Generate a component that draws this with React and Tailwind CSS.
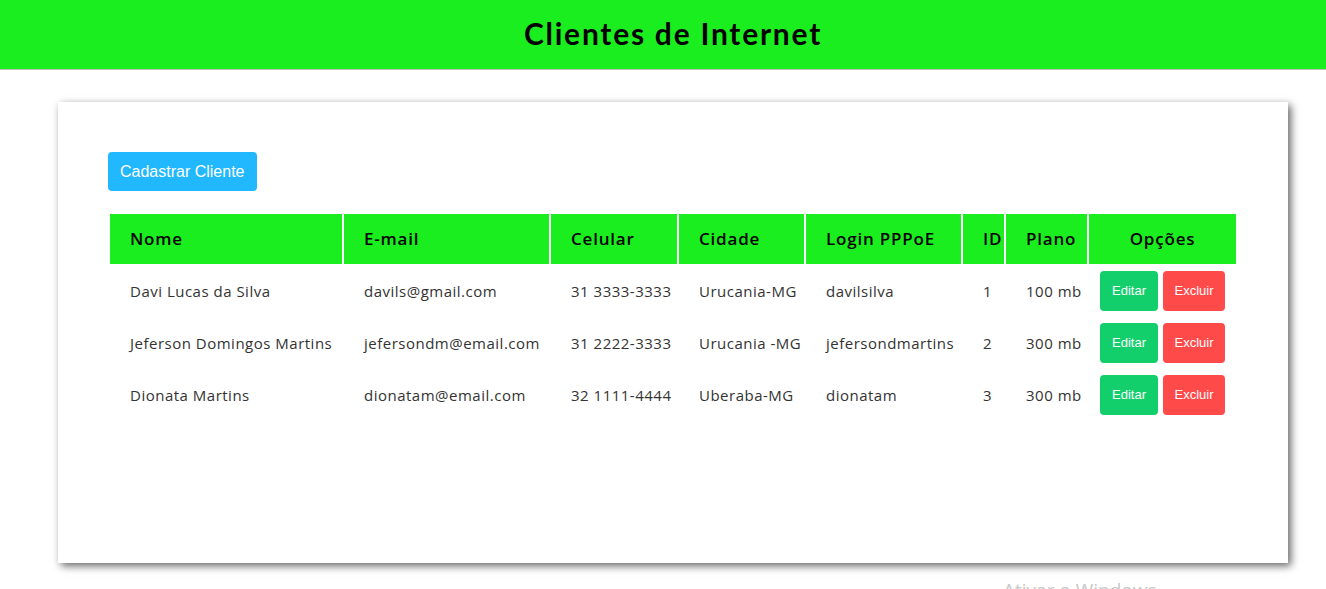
import React from "react";

const rows = [
  ["Davi Lucas da Silva", "davils@gmail.com", "31 3333-3333", "Urucania-MG", "davilsilva", "1", "100 mb"],
  ["Jeferson Domingos Martins", "jefersondm@email.com", "31 2222-3333", "Urucania -MG", "jefersondmartins", "2", "300 mb"],
  ["Dionata Martins", "dionatam@email.com", "32 1111-4444", "Uberaba-MG", "dionatam", "3", "300 mb"],
];

const heads = [
  ["Nome", "w-[232px]"],
  ["E-mail", "w-[205px]"],
  ["Celular", "w-[126px]"],
  ["Cidade", "w-[125px]"],
  ["Login PPPoE", "w-[155px]"],
  ["ID", "w-[41px]"],
  ["Plano", "w-[81px]"],
];

export default function App() {
  return (
    <div className="relative min-h-[589px] bg-white overflow-hidden" style={{ fontFamily: "'Open Sans', 'Noto Sans', sans-serif" }}>
      <header className="h-[70px] bg-[#1bee1e] border-b border-[#bdbdbd] flex items-center justify-center pb-[4px] pl-[20px]">
        <h1 className="text-[30px] font-bold text-black tracking-[1.75px] leading-none" style={{ fontFamily: "Lato, sans-serif" }}>Clientes de Internet</h1>
      </header>
      <div className="mt-[32px] ml-[58px] w-[1230px] h-[461px] bg-white shadow-[3px_3px_8px_rgba(0,0,0,0.6)] p-[50px]">
        <button className="h-[39px] px-[12px] rounded-[4px] bg-[#21b8ff] text-white text-[16px]" style={{ fontFamily: "'Liberation Sans', Arial, sans-serif" }}>
          Cadastrar Cliente
        </button>
        <table className="mt-[21px] border-separate border-spacing-[2px] table-fixed w-[1130px]">
          <thead>
            <tr className="h-[50px]">
              {heads.map(([h, w]) => (
                <th key={h} className={`${w} bg-[#1bee1e] text-left pl-[20px] text-[17px] font-semibold tracking-[0.8px] text-black whitespace-nowrap`}>{h}</th>
              ))}
              <th className="bg-[#1bee1e] text-center text-[17px] font-semibold tracking-[0.8px] text-black">Opções</th>
            </tr>
          </thead>
          <tbody>
            {rows.map((r) => (
              <tr key={r[0]} className="h-[50px]">
                {r.map((c, i) => (
                  <td key={i} className="pl-[20px] text-[15px] tracking-[0.5px] text-[#333] whitespace-nowrap leading-none">{c}</td>
                ))}
                <td className="text-center">
                  <div className="flex justify-center gap-[5px]" style={{ fontFamily: "'Liberation Sans Narrow', 'Liberation Sans', Arial, sans-serif" }}>
                    <button className="w-[58px] h-[40px] rounded-[4px] bg-[#13cf6b] text-white text-[13px]">Editar</button>
                    <button className="w-[62px] h-[40px] rounded-[4px] bg-[#ff4a4a] text-white text-[13px]">Excluir</button>
                  </div>
                </td>
              </tr>
            ))}
          </tbody>
        </table>
      </div>
      <div className="absolute left-[1003px] top-[576px] text-[19px] text-[#c8c8c8]" style={{ fontFamily: "'Open Sans', sans-serif" }}>Ativar o Windows</div>
    </div>
  );
}
